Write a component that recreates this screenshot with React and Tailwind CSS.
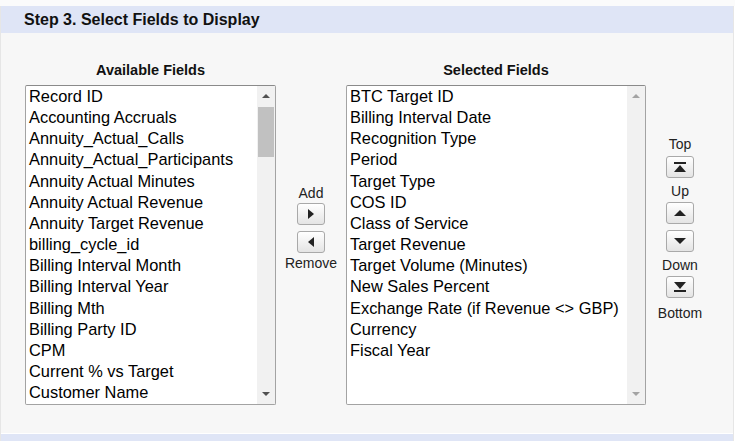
import React from "react";

const availableFields = [
  "Record ID",
  "Accounting Accruals",
  "Annuity_Actual_Calls",
  "Annuity_Actual_Participants",
  "Annuity Actual Minutes",
  "Annuity Actual Revenue",
  "Annuity Target Revenue",
  "billing_cycle_id",
  "Billing Interval Month",
  "Billing Interval Year",
  "Billing Mth",
  "Billing Party ID",
  "CPM",
  "Current % vs Target",
  "Customer Name",
];

const selectedFields = [
  "BTC Target ID",
  "Billing Interval Date",
  "Recognition Type",
  "Period",
  "Target Type",
  "COS ID",
  "Class of Service",
  "Target Revenue",
  "Target Volume (Minutes)",
  "New Sales Percent",
  "Exchange Rate (if Revenue <> GBP)",
  "Currency",
  "Fiscal Year",
];

function Arrow({ dir, color }) {
  // small scrollbar triangles
  const pts = dir === "up" ? "0,4 4,0 8,4" : "0,0 8,0 4,4";
  return (
    <svg width="8" height="4" viewBox="0 0 8 4">
      <polygon points={pts} fill={color} />
    </svg>
  );
}

function Scrollbar({ thumb }) {
  const arrow = thumb ? "#505050" : "#a3a3a3";
  return (
    <div className="w-[18px] bg-[#f1f1f1] flex flex-col">
      <div className="h-[20px] flex items-center justify-center">
        <Arrow dir="up" color={arrow} />
      </div>
      {thumb && <div className="mt-[1px] mx-px h-[50px] bg-[#c1c1c1]" />}
      <div className="flex-1" />
      <div className="h-[20px] flex items-center justify-center">
        <Arrow dir="down" color={arrow} />
      </div>
    </div>
  );
}

function ListBox({ items, width, thumb }) {
  return (
    <div
      className={`${width} h-[320px] bg-white border border-[#a3a3a3] border-t-[#8a8a8a] rounded-[2px] flex`}
    >
      <div className="flex-1 overflow-hidden pl-[3px] text-[16.4px] leading-[21.15px] text-black">
        {items.map((item) => (
          <div key={item} className="whitespace-nowrap">
            {item}
          </div>
        ))}
      </div>
      <Scrollbar thumb={thumb} />
    </div>
  );
}

function Btn({ children }) {
  return (
    <div className="w-[28px] h-[22px] rounded-[3px] border border-[#a9a9a9] bg-gradient-to-b from-white to-[#e4e4e4] flex items-center justify-center">
      {children}
    </div>
  );
}

const ink = "#222";

function Label({ children, className = "" }) {
  return <div className={`text-[14px] leading-[16px] text-[#222] ${className}`}>{children}</div>;
}

export default function App() {
  return (
    <div className="w-[735px] h-[441px] bg-white font-['Liberation_Sans',Arial,sans-serif]">
      <div className="h-[6px] bg-[#fbfbfb]" />
      <div className="w-[734px] border-x border-[#e6e6e6]">
        <div className="h-[27px] bg-[#dfe5f6] pl-[23px] pt-[1px] text-[16px] leading-[26px] font-bold text-[#111]">
          Step 3. Select Fields to Display
        </div>

        <div className="h-[400px] bg-[#f7f7f7] flex pl-[24px]">
          {/* available */}
          <div className="w-[251px] pt-[29px] flex flex-col items-center">
            <div className="text-[14.5px] leading-[16px] font-bold text-[#111] mb-[7px]">
              Available Fields
            </div>
            <ListBox items={availableFields} width="w-[251px]" thumb />
          </div>

          {/* add / remove */}
          <div className="w-[70px] pt-[152px] flex flex-col items-center">
            <Label>Add</Label>
            <div className="mt-[2px]">
              <Btn>
                <svg width="6" height="10" viewBox="0 0 6 10">
                  <polygon points="0,0 6,5 0,10" fill={ink} />
                </svg>
              </Btn>
            </div>
            <div className="mt-[6px]">
              <Btn>
                <svg width="6" height="10" viewBox="0 0 6 10">
                  <polygon points="6,0 0,5 6,10" fill={ink} />
                </svg>
              </Btn>
            </div>
            <Label className="mt-[2px]">Remove</Label>
          </div>

          {/* selected */}
          <div className="w-[300px] pt-[29px] flex flex-col items-center">
            <div className="text-[14.5px] leading-[16px] font-bold text-[#111] mb-[7px]">
              Selected Fields
            </div>
            <ListBox items={selectedFields} width="w-[300px]" />
          </div>

          {/* ordering */}
          <div className="w-[68px] pt-[103px] flex flex-col items-center">
            <Label>Top</Label>
            <div className="mt-[4px]">
              <Btn>
                <svg width="12" height="10" viewBox="0 0 12 10">
                  <rect x="0" y="0" width="12" height="2" fill={ink} />
                  <polygon points="0,10 6,3 12,10" fill={ink} />
                </svg>
              </Btn>
            </div>
            <Label className="mt-[5px]">Up</Label>
            <div className="mt-[3px]">
              <Btn>
                <svg width="12" height="6" viewBox="0 0 12 6">
                  <polygon points="0,6 6,0 12,6" fill={ink} />
                </svg>
              </Btn>
            </div>
            <div className="mt-[6px]">
              <Btn>
                <svg width="12" height="6" viewBox="0 0 12 6">
                  <polygon points="0,0 12,0 6,6" fill={ink} />
                </svg>
              </Btn>
            </div>
            <Label className="mt-[5px]">Down</Label>
            <div className="mt-[3px]">
              <Btn>
                <svg width="12" height="10" viewBox="0 0 12 10">
                  <polygon points="0,0 12,0 6,7" fill={ink} />
                  <rect x="0" y="8" width="12" height="2" fill={ink} />
                </svg>
              </Btn>
            </div>
            <Label className="mt-[7px]">Bottom</Label>
          </div>
        </div>

        <div className="h-px bg-white" />
        <div className="h-[7px] bg-[#dfe5f6]" />
      </div>
    </div>
  );
}
